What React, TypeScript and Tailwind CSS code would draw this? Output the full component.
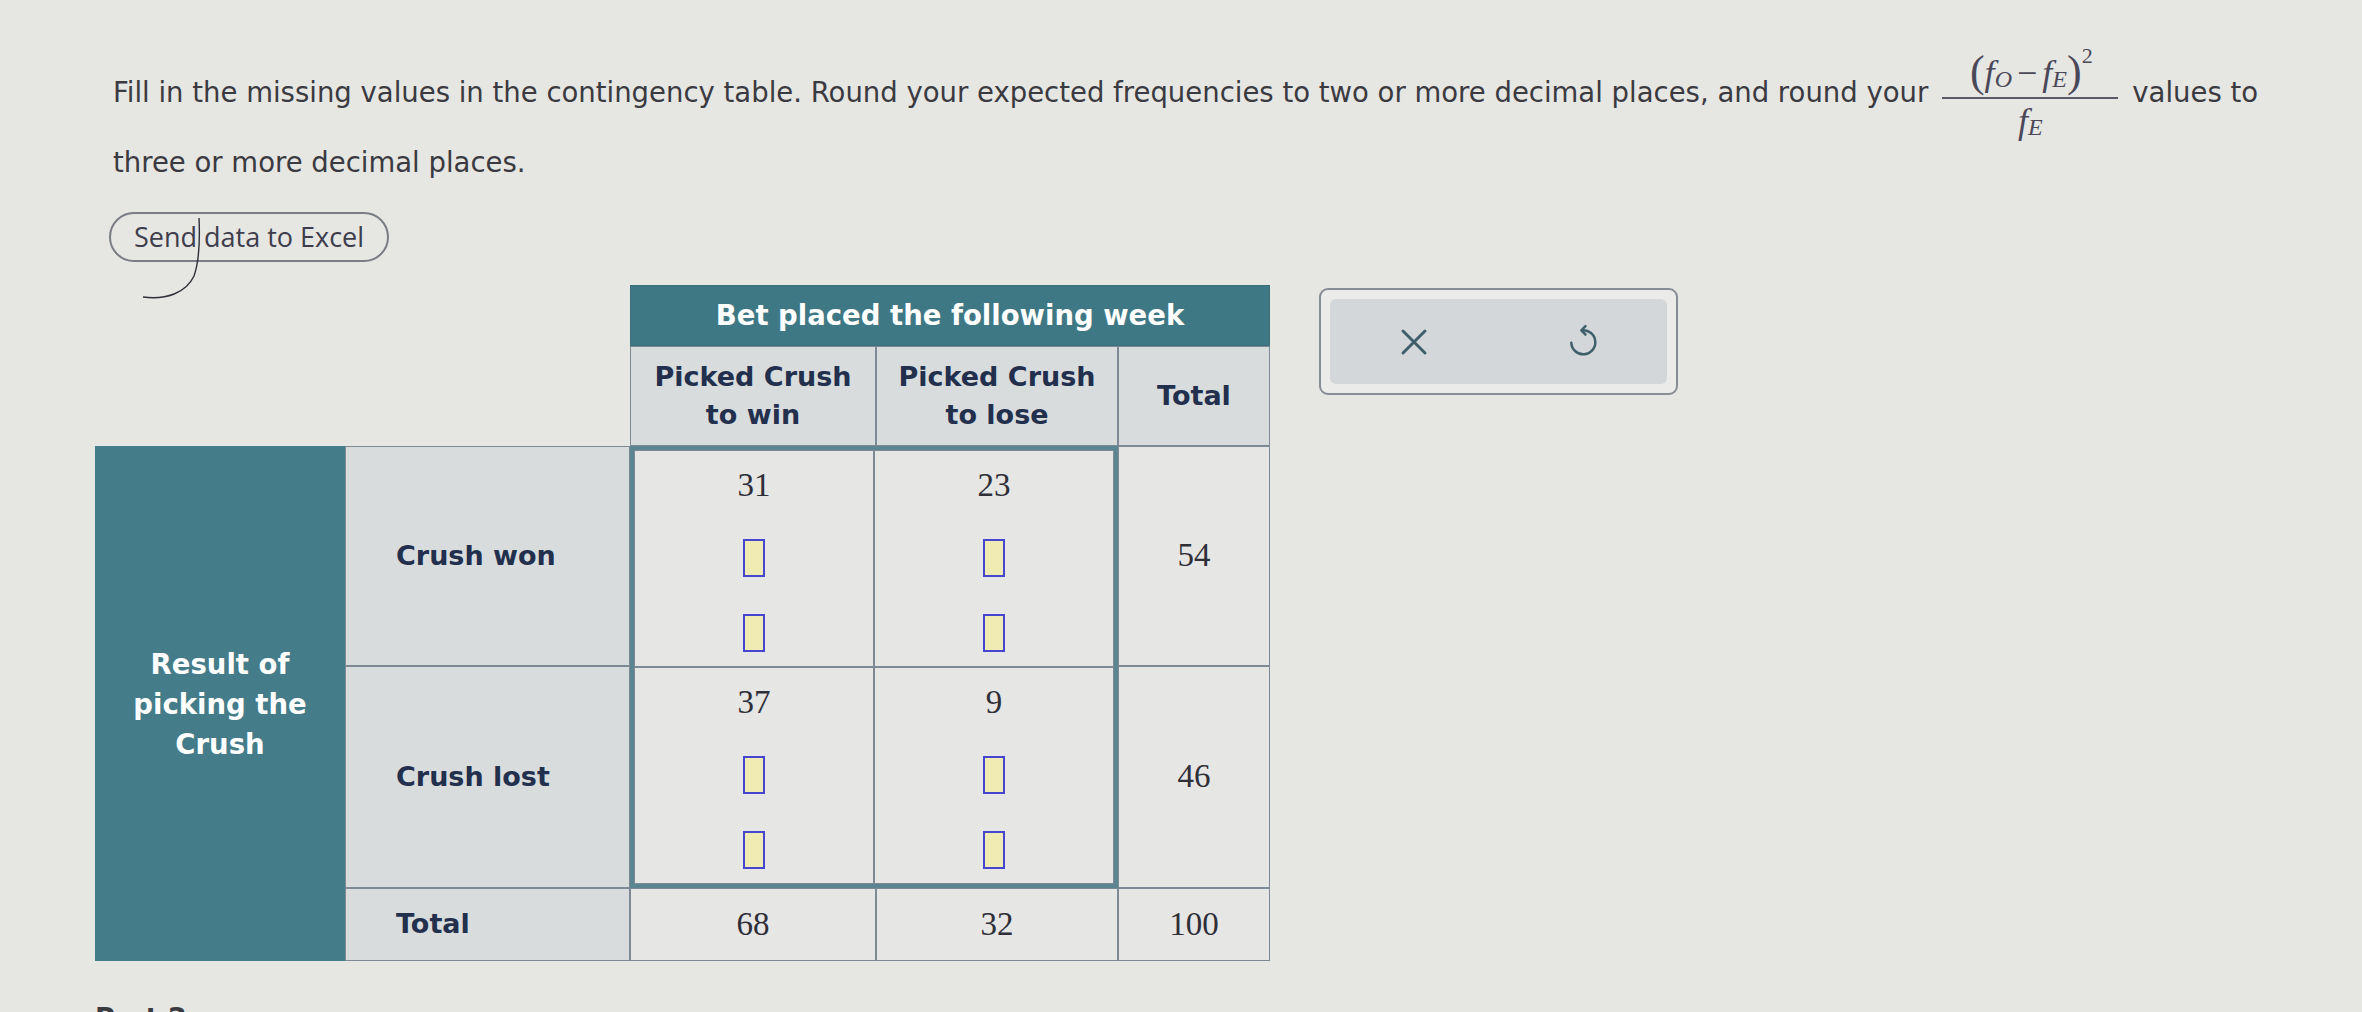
import { X } from 'lucide-react';

const labelCell = 'flex items-center border border-[#7d8a96] bg-[#d9dcdd] pl-[50px] text-[27px] font-bold text-[#22304d]';
const headCell = 'flex flex-col items-center justify-center border border-[#7d8a96] bg-[#d9dcdd] text-center text-[27px] font-bold leading-[38px] text-[#22304d]';
const numCell = 'flex items-center justify-center border border-[#7d8a96] bg-[#e6e6e4] font-["Liberation_Serif",serif] text-[33px] text-[#2f2f38]';

function AnswerBox() {
  return <span className="block h-[38px] w-[22px] border-2 border-[#4545d2] bg-[#efebb3]" />;
}

function DataCell({ value }: { value: string }) {
  return (
    <div className="flex flex-col items-center gap-[37px] border border-[#7d8a96] bg-[#e6e6e4] pt-[18px]">
      <span className="font-['Liberation_Serif',serif] text-[33px] leading-[33px] text-[#2f2f38]">{value}</span>
      <AnswerBox />
      <AnswerBox />
    </div>
  );
}

function Ratio() {
  return (
    <span className="mx-[14px] inline-flex flex-col items-center font-['Liberation_Serif',serif] italic text-[#4a4858]">
      <span className="flex items-end pb-[2px] pl-[2px] text-[36px] leading-[44px]">
        <span className="not-italic text-[44px] leading-[46px]">(</span>
        <span>f</span>
        <span className="mb-[-6px] text-[24px]">O</span>
        <span className="mx-[5px] not-italic">−</span>
        <span>f</span>
        <span className="mb-[-6px] text-[24px]">E</span>
        <span className="not-italic text-[44px] leading-[46px]">)</span>
        <span className="mb-[28px] not-italic text-[22px] leading-[22px]">2</span>
      </span>
      <span className="h-[2px] w-[176px] bg-[#5b5966]" />
      <span className="flex items-end pt-[2px] text-[36px] leading-[40px]">
        <span>f</span>
        <span className="mb-[-6px] text-[24px]">E</span>
      </span>
    </span>
  );
}

function UndoIcon() {
  return (
    <svg width="40" height="40" viewBox="0 0 24 24" fill="none" stroke="#3f5f6c" strokeWidth="1.5" strokeLinecap="round" strokeLinejoin="round">
      <path d="M11.5 5 A7.2 7.2 0 1 1 5 12.5" />
      <path d="M13.5 2.5 L11 5 L13.5 7.5" />
    </svg>
  );
}

export default function App() {
  return (
    <div className="relative h-[1012px] w-[2362px] overflow-hidden bg-[#e6e6e3] font-['DejaVu_Sans',sans-serif] text-[#3a3a40]">
      <div className="pl-[95px] pt-[40px]">
        <div className="pl-[18px]">
          <div className="flex h-[106px] items-center whitespace-nowrap text-[27.5px]">
            <span>Fill in the missing values in the contingency table. Round your expected frequencies to two or more decimal places, and round your</span>
            <Ratio />
            <span>values to</span>
          </div>
          <p className="text-[27.5px] leading-[32px]">three or more decimal places.</p>
        </div>

        <button className="ml-[14px] mt-[34px] flex h-[50px] w-[280px] items-center justify-center rounded-full border-2 border-[#7a7d84] font-['Open_Sans',sans-serif] text-[27px] text-[#3d3d4b]">
          Send data to Excel
        </button>

        <div className="mt-[23px] flex items-start gap-[49px]">
          <div className="grid grid-cols-[250px_285px_246px_242px_152px] grid-rows-[61px_100px_220px_222px_73px]">
            <div className="col-span-2" />
            <div className="col-span-3 flex items-center justify-center border border-[#3a6f7b] bg-[#3f7885] text-[27.5px] font-bold text-white">
              Bet placed the following week
            </div>

            <div className="col-span-2" />
            <div className={headCell}>
              <span>Picked Crush</span>
              <span>to win</span>
            </div>
            <div className={headCell}>
              <span>Picked Crush</span>
              <span>to lose</span>
            </div>
            <div className={headCell}>Total</div>

            <div className="row-span-3 flex flex-col items-center justify-center bg-[#457c89] text-center text-[27.5px] font-bold leading-[40px] text-white">
              <span>Result of</span>
              <span>picking the</span>
              <span>Crush</span>
            </div>
            <div className={labelCell}>Crush won</div>
            <div className="col-span-2 row-span-2 grid grid-cols-2 grid-rows-2 border-4 border-[#5a8591]">
              <DataCell value="31" />
              <DataCell value="23" />
              <DataCell value="37" />
              <DataCell value="9" />
            </div>
            <div className={numCell}>54</div>

            <div className={labelCell}>Crush lost</div>
            <div className={numCell}>46</div>

            <div className={labelCell}>Total</div>
            <div className={numCell}>68</div>
            <div className={numCell}>32</div>
            <div className={numCell}>100</div>
          </div>

          <div className="mt-[3px] rounded-[9px] border-2 border-[#878d94] bg-[#ebebea] p-[9px]">
            <div className="flex h-[85px] w-[337px] items-center rounded-[6px] bg-[#d4d7d9]">
              <button className="flex flex-1 items-center justify-center text-[#3f5f6c]">
                <X className="h-[44px] w-[44px]" strokeWidth={1.6} />
              </button>
              <button className="flex flex-1 items-center justify-center">
                <UndoIcon />
              </button>
            </div>
          </div>
        </div>

        <p className="mt-[41px] text-[27px] font-bold leading-[32px] text-[#3a3a40]">Part 2</p>
      </div>

      <svg className="pointer-events-none absolute left-0 top-0" width="400" height="320" fill="none">
        <path d="M199 218 C200 240 199 262 194 276 C186 293 166 300 143 297" stroke="#2f2f3a" strokeWidth="1.4" />
      </svg>
    </div>
  );
}
